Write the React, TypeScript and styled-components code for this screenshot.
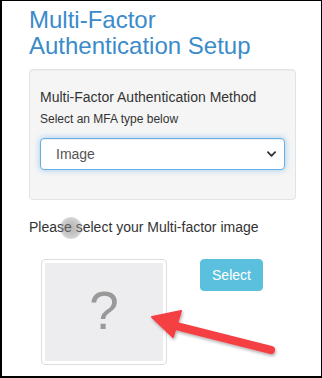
import styled, { createGlobalStyle } from 'styled-components'

const GlobalStyle = createGlobalStyle`
  html, body {
    margin: 0;
    padding: 0;
    background: #fff;
  }
  * {
    box-sizing: border-box;
  }
`

export default function App() {
  return (
    <>
      <GlobalStyle />
      <Frame>
        <Title>Multi-Factor Authentication Setup</Title>

        <Well>
          <MethodLabel>Multi-Factor Authentication Method</MethodLabel>
          <HelpText>Select an MFA type below</HelpText>
          <SelectWrap>
            <MethodSelect defaultValue="image">
              <option value="image">Image</option>
            </MethodSelect>
            <Chevron viewBox="0 0 10 6" aria-hidden>
              <path d="M1 1l4 4 4-4" fill="none" stroke="#333" strokeWidth="2" strokeLinecap="round" strokeLinejoin="round" />
            </Chevron>
          </SelectWrap>
        </Well>

        <Prompt>
          Please select your Multi-factor image
          <ClickMark />
        </Prompt>

        <ImageRow>
          <Thumbnail>
            <Placeholder>?</Placeholder>
          </Thumbnail>
          <InfoButton>Select</InfoButton>
        </ImageRow>

        {/* annotation arrow drawn over the screenshot */}
        <Annotation viewBox="0 0 322 378" aria-hidden>
          <defs>
            <filter id="shadow" x="-20%" y="-20%" width="140%" height="140%">
              <feDropShadow dx="1" dy="2" stdDeviation="1.5" floodColor="#000" floodOpacity="0.3" />
            </filter>
          </defs>
          <g filter="url(#shadow)" fill="#f43f43" stroke="#f43f43">
            <line x1="172" y1="325" x2="271" y2="350" strokeWidth="8" strokeLinecap="round" />
            <polygon points="152,317 181,311 173,337" strokeWidth="2" strokeLinejoin="round" />
          </g>
        </Annotation>
      </Frame>
    </>
  )
}

const Frame = styled.div`
  position: relative;
  width: 322px;
  height: 378px;
  border-style: solid;
  border-color: #000;
  border-width: 1px 1px 2px 2px;
  padding: 6px 0 0 27px;
  font-family: 'Liberation Sans', Arial, sans-serif;
  color: #333;
  overflow: hidden;
`

const Title = styled.h1`
  margin: 0 0 10px;
  width: 240px;
  font-size: 24px;
  line-height: 26px;
  font-weight: 400;
  color: #3b8bca;
`

const Well = styled.div`
  width: 267px;
  padding: 17px 10px 29px;
  background: #f5f5f5;
  border: 1px solid #e3e3e3;
  border-radius: 4px;
  box-shadow: inset 0 1px 1px rgba(0, 0, 0, 0.03);
`

const MethodLabel = styled.div`
  font-size: 14px;
  line-height: 20px;
  color: #333;
`

const HelpText = styled.div`
  margin-top: 4px;
  font-size: 12px;
  line-height: 16px;
  color: #333;
`

const SelectWrap = styled.div`
  position: relative;
  margin-top: 11px;
`

const MethodSelect = styled.select`
  display: block;
  width: 100%;
  height: 32px;
  padding: 0 24px 0 15px;
  appearance: none;
  background: #fff;
  border: 1px solid #66afe9;
  border-radius: 4px;
  box-shadow: inset 0 1px 1px rgba(0, 0, 0, 0.075), 0 0 6px rgba(102, 175, 233, 0.6);
  font-family: inherit;
  font-size: 14px;
  color: #555;
  outline: none;
`

const Chevron = styled.svg`
  position: absolute;
  right: 9px;
  top: 13px;
  width: 9px;
  height: 6px;
  pointer-events: none;
`

const Prompt = styled.p`
  position: relative;
  margin: 17px 0 0;
  font-size: 14px;
  line-height: 20px;
  color: #333;
`

const ClickMark = styled.span`
  position: absolute;
  left: 31px;
  top: 0;
  width: 22px;
  height: 22px;
  border-radius: 50%;
  background: radial-gradient(circle, rgba(120, 120, 120, 0.55) 0%, rgba(140, 140, 140, 0.45) 55%, rgba(160, 160, 160, 0) 100%);
`

const ImageRow = styled.div`
  display: flex;
  align-items: flex-start;
  gap: 33px;
  margin: 22px 0 0 12px;
`

const Thumbnail = styled.div`
  width: 126px;
  height: 106px;
  padding: 3px;
  background: #fff;
  border: 1px solid #ddd;
  border-radius: 4px;
`

const Placeholder = styled.div`
  display: flex;
  align-items: center;
  justify-content: center;
  height: 100%;
  background: #ededef;
  font-size: 53px;
  line-height: 1;
  color: #999;
  padding-bottom: 4px;
`

const InfoButton = styled.button`
  width: 63px;
  height: 32px;
  padding: 0;
  background: #5bc0de;
  border: 1px solid #5bc0de;
  border-radius: 4px;
  font-family: inherit;
  font-size: 14px;
  color: #fff;
  cursor: pointer;
`

const Annotation = styled.svg`
  position: absolute;
  left: -2px;
  top: -1px;
  width: 322px;
  height: 378px;
  pointer-events: none;
`
